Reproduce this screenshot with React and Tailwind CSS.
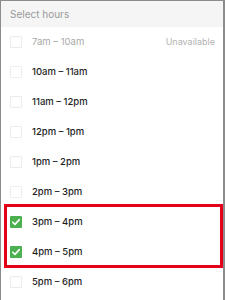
import React from "react";

const rows = [
  { label: "7am – 10am", unavailable: true },
  { label: "10am – 11am" },
  { label: "11am – 12pm" },
  { label: "12pm – 1pm" },
  { label: "1pm – 2pm" },
  { label: "2pm – 3pm" },
  { label: "3pm – 4pm", checked: true },
  { label: "4pm – 5pm", checked: true },
  { label: "5pm – 6pm" },
];

function Box({ checked }) {
  if (checked) {
    return (
      <div className="w-3 h-3 rounded-[1px] bg-[#4caf50] flex items-center justify-center">
        <svg width="10" height="10" viewBox="0 0 10 10" fill="none">
          <path d="M1.8 5.2 L4 7.4 L8.3 2.6" stroke="white" strokeWidth="1.6" strokeLinecap="round" strokeLinejoin="round" />
        </svg>
      </div>
    );
  }
  return <div className="w-3 h-3 rounded-[1px] border border-[#ececec] bg-white" />;
}

export default function App() {
  return (
    <div
      className="relative w-[225px] h-[300px] overflow-hidden bg-white border-l border-r-2 border-t border-[#8c8c8c]"
      style={{ fontFamily: "Inter, 'Noto Sans', sans-serif" }}
    >
      <div className="h-[26px] bg-[#f5f5f5] flex items-center pl-[9px] text-[10px] text-[#9a9a9a]">
        Select hours
      </div>
      <div className="flex flex-col">
        {rows.map((r) => (
          <div key={r.label} className="h-[30px] flex items-center pl-[9px] pr-[8px]">
            <Box checked={r.checked} />
            <span
              className={
                "ml-[10px] text-[9.5px] " +
                (r.unavailable ? "text-[#a8a8a8]" : "text-[#1f1f1f] font-medium")
              }
            >
              {r.label}
            </span>
            {r.unavailable && (
              <span className="ml-auto text-[9px] text-[#b3b3b3]">Unavailable</span>
            )}
          </div>
        ))}
      </div>
      <div className="absolute left-[3px] right-0 top-[203px] h-[64px] border-[3px] border-[#e3001b]" />
    </div>
  );
}
